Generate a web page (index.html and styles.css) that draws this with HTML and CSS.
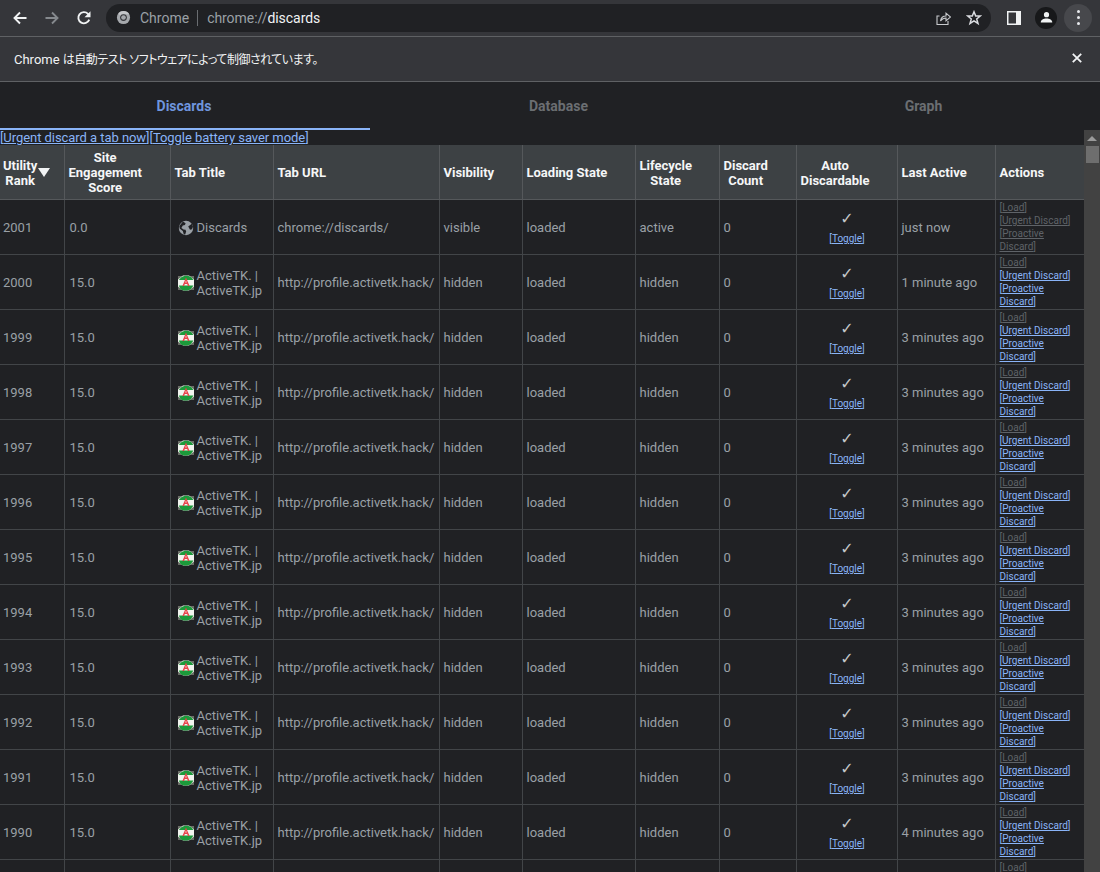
FILE: index.html
```html
<!DOCTYPE html>
<html lang="ja">
<head>
<meta charset="utf-8">
<title>Discards</title>
<link rel="stylesheet" href="styles.css">
</head>
<body>
<svg class="defs" width="0" height="0" aria-hidden="true">
  <symbol id="fav" viewBox="0 0 16 16">
    <rect x="0" y="1" width="16" height="14" fill="#6b6f68"/>
    <path d="M5 0.5h6l5 4v7l-5 4H5l-5-4v-7z" fill="#f2f4ef"/>
    <path d="M3 2.5C6 0 11 0 13.5 2.5L15.5 5H.8z" fill="#1c9a3a"/>
    <path d="M.8 10.5h14.7L13 14c-3 2-8 2-10.5 0z" fill="#1c9a3a"/>
    <path d="M8 2.5 11.6 11H9.9L9.2 9H6.8L6.1 11H4.4zM7.3 7.6h1.4L8 5.6z" fill="#e8434a"/>
  </symbol>
  <symbol id="globe" viewBox="0 0 16 16">
    <circle cx="8" cy="8" r="7.2" fill="#9aa0a6"/>
    <path d="M5 1.6 7.6 3.2 7 5 4.8 5.6 3.4 8 6 9.8 7.2 9.4 8.2 11.2 7.2 14.6 5.8 14.2 4.8 11 1.6 8.6 1.4 6zM10.2 6.4l3.6-2.6 1.2 3-1 2.4-2 .6z" fill="#202124"/>
  </symbol>
</svg>

<header class="toolbar">
  <svg class="nav" viewBox="0 0 16 16"><path d="M14.5 8H2.5M8 2.5 2.5 8 8 13.5" fill="none" stroke="#f1f3f4" stroke-width="1.9"/></svg>
  <svg class="nav" viewBox="0 0 16 16"><path d="M1.5 8h12M8 2.5 13.5 8 8 13.5" fill="none" stroke="#85898d" stroke-width="1.9"/></svg>
  <svg class="nav" viewBox="0 0 16 16"><path d="M13.2 9.6A5.6 5.6 0 1 1 12 3.9L13.6 5.5" fill="none" stroke="#f1f3f4" stroke-width="1.9"/><path d="M14.5 1.2v6h-6z" fill="#f1f3f4"/></svg>
  <div class="omnibox">
    <svg class="chrome-logo" viewBox="0 0 16 16"><circle cx="8" cy="8" r="7" fill="#a5a8ac"/><path d="M8 1a7 7 0 0 1 6.1 3.5H8A3.5 3.5 0 0 0 4.8 6.6L2.5 3.5A7 7 0 0 1 8 1z" fill="#c4c6c9"/><circle cx="8" cy="8" r="3.6" fill="#35363a"/><circle cx="8" cy="8" r="2.5" fill="#a5a8ac"/></svg>
    <span class="origin">Chrome</span>
    <span class="omni-sep"></span>
    <span class="url">chrome://<b>discards</b></span>
    <span class="omni-end">
      <svg class="omni-icon" viewBox="0 0 16 16"><path d="M4.5 6H2v8.500h11V11" fill="none" stroke="#c8cacd" stroke-width="1.100"/><path d="M5.500 11C6 7.600 8 6 11 6V3.200L15.500 7 11 10.800V8c-2.400 0-4 1-5.500 3z" fill="none" stroke="#c8cacd" stroke-width="1.100"/></svg>
      <svg class="omni-icon" viewBox="0 0 16 16"><path d="M8 1.800 9.700 6h4.600L10.700 8.900l1.300 4.500L8 10.800l-4 2.600 1.300-4.500L1.700 6h4.600z" fill="none" stroke="#dadce0" stroke-width="1.500"/></svg>
    </span>
  </div>
  <svg class="panel-icon" viewBox="0 0 14 14"><rect width="14" height="14" fill="#f1f3f4"/><rect x="1.500" y="1.500" width="7.500" height="11" fill="#35363a"/></svg>
  <span class="avatar"><svg viewBox="0 0 14 14"><circle cx="7" cy="4" r="2.800" fill="#f1f3f4"/><path d="M.8 12.300c0-3 3-4.300 6.200-4.300s6.200 1.300 6.200 4.300z" fill="#f1f3f4"/></svg></span>
  <span class="menu"><i></i><i></i><i></i></span>
</header>

<div class="infobar">
  <span>Chrome <span class="ja">は自動テスト ソフトウェアによって制御されています。</span></span>
  <svg class="close" viewBox="0 0 10 10"><path d="M.8.800l8.400 8.400M9.200.800.8 9.200" stroke="#f1f3f4" stroke-width="1.800"/></svg>
</div>

<nav class="tabs">
  <span class="tab active">Discards</span>
  <span class="tab">Database</span>
  <span class="tab">Graph</span>
</nav>

<main class="viewport">
  <div class="content">
    <div class="top-links"><a href="#">[<u>Urgent discard a tab now</u>]</a><a href="#">[<u>Toggle battery saver mode</u>]</a></div>
    <table>
      <colgroup><col class="c1"><col class="c2"><col class="c3"><col class="c4"><col class="c5"><col class="c6"><col class="c7"><col class="c8"><col class="c9"><col class="c10"><col class="c11"></colgroup>
      <thead>
        <tr>
          <th><span class="stack sorted">Utility<br>Rank<em class="arrow"></em></span></th>
          <th><span class="stack">Site<br>Engagement<br>Score</span></th>
          <th>Tab Title</th><th>Tab URL</th><th>Visibility</th><th>Loading State</th>
          <th><span class="stack">Lifecycle<br>State</span></th><th><span class="stack">Discard<br>Count</span></th>
          <th><span class="stack">Auto<br>Discardable</span></th><th>Last Active</th><th>Actions</th>
        </tr>
      </thead>
      <tbody>
        <tr><td>2001</td><td>0.0</td><td><div class="title"><svg class="favicon"><use href="#globe"/></svg><span>Discards</span></div></td><td>chrome://discards/</td><td>visible</td><td>loaded</td><td>active</td><td>0</td><td class="auto"><div class="check">✓</div><a href="#">[<u>Toggle</u>]</a></td><td>just now</td><td class="actions"><span class="off">[<u>Load</u>]</span><br><span class="off">[<u>Urgent Discard</u>]</span><br><span class="off">[<u>Proactive Discard</u>]</span></td></tr>
        <tr><td>2000</td><td>15.0</td><td><div class="title"><svg class="favicon"><use href="#fav"/></svg><span>ActiveTK. | ActiveTK.jp</span></div></td><td>http://profile.activetk.hack/</td><td>hidden</td><td>loaded</td><td>hidden</td><td>0</td><td class="auto"><div class="check">✓</div><a href="#">[<u>Toggle</u>]</a></td><td>1 minute ago</td><td class="actions"><span class="off">[<u>Load</u>]</span><br><a href="#">[<u>Urgent Discard</u>]</a><br><a href="#">[<u>Proactive Discard</u>]</a></td></tr>
        <tr><td>1999</td><td>15.0</td><td><div class="title"><svg class="favicon"><use href="#fav"/></svg><span>ActiveTK. | ActiveTK.jp</span></div></td><td>http://profile.activetk.hack/</td><td>hidden</td><td>loaded</td><td>hidden</td><td>0</td><td class="auto"><div class="check">✓</div><a href="#">[<u>Toggle</u>]</a></td><td>3 minutes ago</td><td class="actions"><span class="off">[<u>Load</u>]</span><br><a href="#">[<u>Urgent Discard</u>]</a><br><a href="#">[<u>Proactive Discard</u>]</a></td></tr>
        <tr><td>1998</td><td>15.0</td><td><div class="title"><svg class="favicon"><use href="#fav"/></svg><span>ActiveTK. | ActiveTK.jp</span></div></td><td>http://profile.activetk.hack/</td><td>hidden</td><td>loaded</td><td>hidden</td><td>0</td><td class="auto"><div class="check">✓</div><a href="#">[<u>Toggle</u>]</a></td><td>3 minutes ago</td><td class="actions"><span class="off">[<u>Load</u>]</span><br><a href="#">[<u>Urgent Discard</u>]</a><br><a href="#">[<u>Proactive Discard</u>]</a></td></tr>
        <tr><td>1997</td><td>15.0</td><td><div class="title"><svg class="favicon"><use href="#fav"/></svg><span>ActiveTK. | ActiveTK.jp</span></div></td><td>http://profile.activetk.hack/</td><td>hidden</td><td>loaded</td><td>hidden</td><td>0</td><td class="auto"><div class="check">✓</div><a href="#">[<u>Toggle</u>]</a></td><td>3 minutes ago</td><td class="actions"><span class="off">[<u>Load</u>]</span><br><a href="#">[<u>Urgent Discard</u>]</a><br><a href="#">[<u>Proactive Discard</u>]</a></td></tr>
        <tr><td>1996</td><td>15.0</td><td><div class="title"><svg class="favicon"><use href="#fav"/></svg><span>ActiveTK. | ActiveTK.jp</span></div></td><td>http://profile.activetk.hack/</td><td>hidden</td><td>loaded</td><td>hidden</td><td>0</td><td class="auto"><div class="check">✓</div><a href="#">[<u>Toggle</u>]</a></td><td>3 minutes ago</td><td class="actions"><span class="off">[<u>Load</u>]</span><br><a href="#">[<u>Urgent Discard</u>]</a><br><a href="#">[<u>Proactive Discard</u>]</a></td></tr>
        <tr><td>1995</td><td>15.0</td><td><div class="title"><svg class="favicon"><use href="#fav"/></svg><span>ActiveTK. | ActiveTK.jp</span></div></td><td>http://profile.activetk.hack/</td><td>hidden</td><td>loaded</td><td>hidden</td><td>0</td><td class="auto"><div class="check">✓</div><a href="#">[<u>Toggle</u>]</a></td><td>3 minutes ago</td><td class="actions"><span class="off">[<u>Load</u>]</span><br><a href="#">[<u>Urgent Discard</u>]</a><br><a href="#">[<u>Proactive Discard</u>]</a></td></tr>
        <tr><td>1994</td><td>15.0</td><td><div class="title"><svg class="favicon"><use href="#fav"/></svg><span>ActiveTK. | ActiveTK.jp</span></div></td><td>http://profile.activetk.hack/</td><td>hidden</td><td>loaded</td><td>hidden</td><td>0</td><td class="auto"><div class="check">✓</div><a href="#">[<u>Toggle</u>]</a></td><td>3 minutes ago</td><td class="actions"><span class="off">[<u>Load</u>]</span><br><a href="#">[<u>Urgent Discard</u>]</a><br><a href="#">[<u>Proactive Discard</u>]</a></td></tr>
        <tr><td>1993</td><td>15.0</td><td><div class="title"><svg class="favicon"><use href="#fav"/></svg><span>ActiveTK. | ActiveTK.jp</span></div></td><td>http://profile.activetk.hack/</td><td>hidden</td><td>loaded</td><td>hidden</td><td>0</td><td class="auto"><div class="check">✓</div><a href="#">[<u>Toggle</u>]</a></td><td>3 minutes ago</td><td class="actions"><span class="off">[<u>Load</u>]</span><br><a href="#">[<u>Urgent Discard</u>]</a><br><a href="#">[<u>Proactive Discard</u>]</a></td></tr>
        <tr><td>1992</td><td>15.0</td><td><div class="title"><svg class="favicon"><use href="#fav"/></svg><span>ActiveTK. | ActiveTK.jp</span></div></td><td>http://profile.activetk.hack/</td><td>hidden</td><td>loaded</td><td>hidden</td><td>0</td><td class="auto"><div class="check">✓</div><a href="#">[<u>Toggle</u>]</a></td><td>3 minutes ago</td><td class="actions"><span class="off">[<u>Load</u>]</span><br><a href="#">[<u>Urgent Discard</u>]</a><br><a href="#">[<u>Proactive Discard</u>]</a></td></tr>
        <tr><td>1991</td><td>15.0</td><td><div class="title"><svg class="favicon"><use href="#fav"/></svg><span>ActiveTK. | ActiveTK.jp</span></div></td><td>http://profile.activetk.hack/</td><td>hidden</td><td>loaded</td><td>hidden</td><td>0</td><td class="auto"><div class="check">✓</div><a href="#">[<u>Toggle</u>]</a></td><td>3 minutes ago</td><td class="actions"><span class="off">[<u>Load</u>]</span><br><a href="#">[<u>Urgent Discard</u>]</a><br><a href="#">[<u>Proactive Discard</u>]</a></td></tr>
        <tr><td>1990</td><td>15.0</td><td><div class="title"><svg class="favicon"><use href="#fav"/></svg><span>ActiveTK. | ActiveTK.jp</span></div></td><td>http://profile.activetk.hack/</td><td>hidden</td><td>loaded</td><td>hidden</td><td>0</td><td class="auto"><div class="check">✓</div><a href="#">[<u>Toggle</u>]</a></td><td>4 minutes ago</td><td class="actions"><span class="off">[<u>Load</u>]</span><br><a href="#">[<u>Urgent Discard</u>]</a><br><a href="#">[<u>Proactive Discard</u>]</a></td></tr>
        <tr><td>1989</td><td>15.0</td><td><div class="title"><svg class="favicon"><use href="#fav"/></svg><span>ActiveTK. | ActiveTK.jp</span></div></td><td>http://profile.activetk.hack/</td><td>hidden</td><td>loaded</td><td>hidden</td><td>0</td><td class="auto"><div class="check">✓</div><a href="#">[<u>Toggle</u>]</a></td><td>4 minutes ago</td><td class="actions"><span class="off">[<u>Load</u>]</span><br><a href="#">[<u>Urgent Discard</u>]</a><br><a href="#">[<u>Proactive Discard</u>]</a></td></tr>
      </tbody>
    </table>
  </div>
  <div class="scrollbar">
    <div class="scroll-up"></div>
    <div class="thumb"></div>
  </div>
</main>
</body>
</html>
```
FILE: styles.css
```css
* { box-sizing: border-box; }
html, body { margin: 0; height: 872px; overflow: hidden; }
body {
  background: #202124;
  color: #9aa0a6;
  font-family: Roboto, "Noto Sans CJK JP", sans-serif;
  font-size: 13px;
  display: flex;
  flex-direction: column;
}
.defs { position: absolute; }

.toolbar {
  height: 37px;
  flex: none;
  background: #35363a;
  border-bottom: 1px solid #5f6164;
  display: flex;
  align-items: center;
  padding: 0 8px 1px 12px;
}
.nav { width: 16px; height: 16px; margin-right: 16px; flex: none; }
.nav:nth-of-type(3) { margin-right: 14px; }
.omnibox {
  width: 887px;
  height: 28px;
  border-radius: 14px;
  background: #202124;
  display: flex;
  align-items: center;
  padding-left: 10px;
  font-size: 14px;
  color: #9aa0a6;
}
.chrome-logo { width: 15px; height: 15px; margin-right: 9px; }
.omni-sep { width: 1px; height: 16px; background: #6a6d71; margin: 0 9px 0 8px; }
.url { letter-spacing: -0.05px; }
.url b { color: #f1f3f4; font-weight: 400; }
.omni-end { margin-left: auto; display: flex; gap: 15px; padding-right: 9px; align-items: center; }
.omni-icon { width: 16px; height: 16px; }
.panel-icon { width: 14px; height: 14px; margin-left: 16px; flex: none; }
.avatar {
  width: 22px; height: 22px; margin-left: 14px; border-radius: 50%;
  background: #17181a; display: flex; align-items: center; justify-content: center; flex: none;
}
.avatar svg { width: 13px; height: 13px; }
.menu {
  width: 28px; height: 28px; margin-left: 7px; border-radius: 50%; background: #47484c;
  display: flex; flex-direction: column; align-items: center; justify-content: center; gap: 3px; flex: none;
}
.menu i { width: 3px; height: 3px; border-radius: 50%; background: #e8eaed; }

.infobar {
  height: 45px;
  flex: none;
  background: #35363a;
  border-bottom: 1px solid #5f6164;
  color: #f1f3f4;
  display: flex;
  align-items: center;
  justify-content: space-between;
  padding: 0 18px 2px 14px;
  font-size: 13px;
}
.ja { font-size: 12px; font-feature-settings: "palt"; letter-spacing: -0.5px; }
.close { width: 10px; height: 10px; }

.tabs { height: 48px; flex: none; display: flex; }
.tab {
  flex: 0 0 370px;
  height: 48px;
  padding-top: 17px;
  text-align: center;
  font-weight: 700;
  font-size: 14px;
  color: #6b6e72;
  line-height: 15px;
}
.tab:nth-child(2) { flex-basis: 377px; }
.tab:nth-child(3) { flex-basis: 353px; }
.tab.active { color: #6f95de; border-bottom: 2px solid #8ab4f8; padding-right: 2px; }

.viewport { flex: 1; min-height: 0; display: flex; }
.content { flex: 1; min-width: 0; overflow: hidden; }
.top-links { height: 15px; font-size: 13px; line-height: 15px; white-space: nowrap; letter-spacing: -0.05px; }
a { color: #8ab4f8; text-decoration: none; }
u { text-underline-offset: 1px; }

table { width: 1084px; table-layout: fixed; border-collapse: collapse; line-height: 15px; }
.c1 { width: 64px; } .c2 { width: 106px; } .c3 { width: 103px; } .c4 { width: 166px; }
.c5 { width: 83px; } .c6 { width: 113px; } .c7 { width: 84px; } .c8 { width: 77px; }
.c9 { width: 101px; } .c10 { width: 98px; } .c11 { width: 89px; }
th, td { border: 1px solid #424548; border-top: 0; padding: 2px 3px 0 4px; vertical-align: middle; text-align: left; }
th:first-child, td:first-child { border-left: 0; padding-left: 3px; }
td:nth-child(2) { padding-left: 5px; }
th {
  height: 54px;
  background: #3d4144;
  color: #f5f6f7;
  font-weight: 700;
  border-bottom: 1px solid #55585b;
  border-left-color: #55585b;
  border-right-color: #55585b;
}
.stack { display: inline-block; text-align: center; }
td { height: 55px; }
.sorted { position: relative; padding-right: 12px; }
.arrow {
  position: absolute; right: -1px; top: 10px;
  border-left: 6px solid transparent; border-right: 6px solid transparent; border-top: 9px solid #f1f3f4;
}
.title { display: flex; align-items: center; gap: 3px; margin-left: 3px; }
.favicon { width: 16px; height: 16px; flex: none; }
.auto { text-align: center; font-size: 10px; line-height: 13px; padding-top: 1px; }
.check { font-size: 16px; line-height: 20px; padding-bottom: 3px; font-family: "DejaVu Sans", sans-serif; color: #c4c7ca; }
.actions { font-size: 10px; line-height: 13px; padding: 1px 2px 0 4px; }
.off { color: #5f6368; }

.scrollbar { flex: 0 0 16px; background: #424242; display: flex; flex-direction: column; align-items: center; }
.scroll-up {
  margin: 6px 0 5px;
  border-left: 5px solid transparent; border-right: 5px solid transparent; border-bottom: 5px solid #9a9a9a;
}
.thumb { width: 13px; height: 17px; background: #6e6e6e; }
```
